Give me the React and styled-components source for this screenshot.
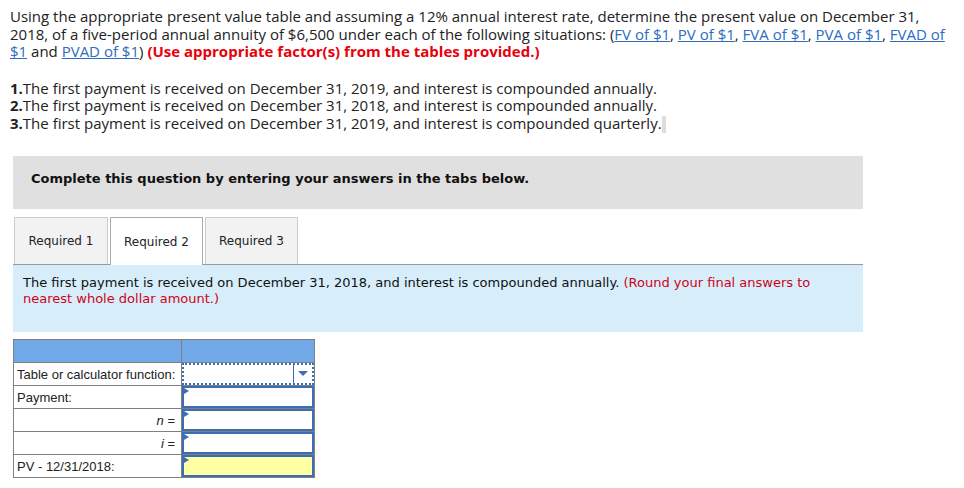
import styled, { createGlobalStyle } from "styled-components";

const GlobalStyle = createGlobalStyle`
  html, body {
    margin: 0;
    padding: 0;
    background: #fff;
  }
`;

const Page = styled.div`
  padding: 8px 10px 0 10px;
  width: 964px;
  box-sizing: border-box;
  color: #222;
`;

const Intro = styled.p`
  margin: 0;
  width: 944px;
  font-family: "Open Sans", Lato, sans-serif;
  font-size: 15px;
  line-height: 17.5px;
  color: #222;
`;

const Link = styled.a`
  color: #2d6cc0;
  text-decoration: underline;
  cursor: pointer;
`;

const Warn = styled.strong`
  color: #e8000b;
`;

const List = styled.div`
  margin-top: 19px;
  font-family: "Open Sans", Lato, sans-serif;
  font-size: 15px;
  line-height: 17.5px;
`;

const Caret = styled.span`
  display: inline-block;
  width: 4px;
  height: 17px;
  background: #ddd;
  vertical-align: -4px;
`;

const Notice = styled.div`
  margin: 23px 0 0 3px;
  width: 850px;
  height: 53px;
  background: #e0e0e0;
  display: flex;
  align-items: center;
  padding: 0 0 8px 18px;
  box-sizing: border-box;
  font-family: "DejaVu Sans", Verdana, sans-serif;
  font-weight: bold;
  font-size: 13px;
  color: #111;
`;

const Tabs = styled.div`
  margin: 8px 0 0 3px;
  width: 850px;
  display: flex;
  gap: 2px;
  padding-left: 1px;
  box-sizing: border-box;
  border-bottom: 1px solid #999;
`;

const Tab = styled.div`
  width: ${(p) => p.$w}px;
  box-sizing: border-box;
  display: flex;
  align-items: center;
  justify-content: center;
  padding-top: 1px;
  font-family: "DejaVu Sans", Verdana, sans-serif;
  font-size: 12px;
  color: #222;
  background: ${(p) => (p.$active ? "#fff" : "#f2f2f2")};
  border: 1px solid ${(p) => (p.$active ? "#aaa" : "#ccc")};
  border-bottom: none;
  margin-bottom: ${(p) => (p.$active ? "-1px" : "0")};
  height: ${(p) => (p.$active ? 48 : 47)}px;
`;

const Panel = styled.div`
  margin-left: 3px;
  width: 850px;
  height: 67px;
  background: #d7eefa;
  padding: 10px 10px 0 10px;
  box-sizing: border-box;
  font-family: "DejaVu Sans", Verdana, sans-serif;
  font-size: 13px;
  line-height: 16px;
  color: #111;
`;

const Red = styled.span`
  color: #d0021b;
`;

const Grid = styled.table`
  margin: 7px 0 0 3px;
  border-collapse: collapse;
  font-family: "Liberation Sans", Arial, sans-serif;
  font-size: 13px;
  color: #222;
`;

const Cell = styled.td`
  border: 1px solid #808080;
  padding: 0;
  height: 22px;
  background: ${(p) => (p.$head ? "#70a8e8" : "#fff")};
`;

const Label = styled.div`
  width: 167px;
  height: 22px;
  box-sizing: border-box;
  padding: 2px ${(p) => (p.$right ? "6px" : "3px")} 0;
  text-align: ${(p) => (p.$right ? "right" : "left")};
  line-height: 20px;
`;

const Ital = styled.i`
  font-style: italic;
`;

const InputBox = styled.div`
  position: relative;
  width: 132px;
  height: 22px;
  box-sizing: border-box;
  border: 2px solid #3b6eb5;
  background: ${(p) => (p.$yellow ? "#ffffa6" : "#fff")};
`;

const Flag = styled.span`
  position: absolute;
  left: 0;
  top: 0;
  width: 0;
  height: 0;
  border-top: 3px solid transparent;
  border-bottom: 3px solid transparent;
  border-left: 5px solid #3b6eb5;
`;

const SelectBox = styled.div`
  width: 132px;
  height: 22px;
  box-sizing: border-box;
  border: 2px dotted #3b6eb5;
  display: flex;
  justify-content: flex-end;
  background: #fff;
`;

const SelectArrow = styled.div`
  width: 18px;
  border-left: 1px solid #3b6eb5;
  display: flex;
  align-items: center;
  justify-content: center;
  &::after {
    content: "";
    border-left: 5px solid transparent;
    border-right: 5px solid transparent;
    border-top: 5px solid #3b6eb5;
  }
`;

function InputCell({ yellow }) {
  return (
    <InputBox $yellow={yellow}>
      <Flag />
    </InputBox>
  );
}

export default function App() {
  return (
    <>
      <GlobalStyle />
      <Page>
        <Intro>
          Using the appropriate present value table and assuming a 12% annual
          interest rate, determine the present value on December 31, 2018, of a
          five-period annual annuity of $6,500 under each of the following
          situations: (<Link>FV of $1</Link>, <Link>PV of $1</Link>,{" "}
          <Link>FVA of $1</Link>, <Link>PVA of $1</Link>, <Link>FVAD of $1</Link>{" "}
          and <Link>PVAD of $1</Link>){" "}
          <Warn>(Use appropriate factor(s) from the tables provided.)</Warn>
        </Intro>
        <List>
          <div>
            <b>1.</b>The first payment is received on December 31, 2019, and
            interest is compounded annually.
          </div>
          <div>
            <b>2.</b>The first payment is received on December 31, 2018, and
            interest is compounded annually.
          </div>
          <div>
            <b>3.</b>The first payment is received on December 31, 2019, and
            interest is compounded quarterly.
            <Caret />
          </div>
        </List>
        <Notice>
          Complete this question by entering your answers in the tabs below.
        </Notice>
        <Tabs>
          <Tab $w={94}>Required 1</Tab>
          <Tab $w={93} $active>
            Required 2
          </Tab>
          <Tab $w={93}>Required 3</Tab>
        </Tabs>
        <Panel>
          The first payment is received on December 31, 2018, and interest is
          compounded annually.{" "}
          <Red>(Round your final answers to nearest whole dollar amount.)</Red>
        </Panel>
        <Grid>
          <tbody>
            <tr>
              <Cell $head>
                <Label />
              </Cell>
              <Cell $head />
            </tr>
            <tr>
              <Cell>
                <Label>Table or calculator function:</Label>
              </Cell>
              <Cell>
                <SelectBox>
                  <SelectArrow />
                </SelectBox>
              </Cell>
            </tr>
            <tr>
              <Cell>
                <Label>Payment:</Label>
              </Cell>
              <Cell>
                <InputCell />
              </Cell>
            </tr>
            <tr>
              <Cell>
                <Label $right>
                  <Ital>n</Ital> =
                </Label>
              </Cell>
              <Cell>
                <InputCell />
              </Cell>
            </tr>
            <tr>
              <Cell>
                <Label $right>
                  <Ital>i</Ital> =
                </Label>
              </Cell>
              <Cell>
                <InputCell />
              </Cell>
            </tr>
            <tr>
              <Cell>
                <Label>PV - 12/31/2018:</Label>
              </Cell>
              <Cell>
                <InputCell yellow />
              </Cell>
            </tr>
          </tbody>
        </Grid>
      </Page>
    </>
  );
}
